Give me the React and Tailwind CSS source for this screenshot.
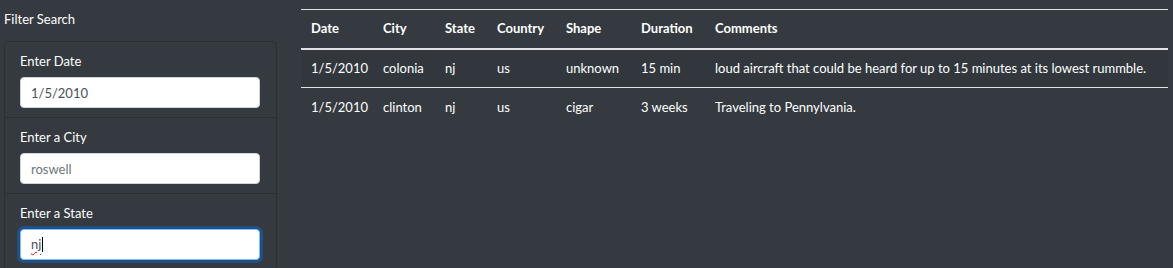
import React from "react";

const rows = [
  {
    date: "1/5/2010",
    city: "colonia",
    state: "nj",
    country: "us",
    shape: "unknown",
    duration: "15 min",
    comments: "loud aircraft that could be heard for up to 15 minutes at its lowest rummble.",
  },
  {
    date: "1/5/2010",
    city: "clinton",
    state: "nj",
    country: "us",
    shape: "cigar",
    duration: "3 weeks",
    comments: "Traveling to Pennylvania.",
  },
];

const headers = [
  { name: "Date", w: "w-[72px]" },
  { name: "City", w: "w-[62px]" },
  { name: "State", w: "w-[52px]" },
  { name: "Country", w: "w-[69px]" },
  { name: "Shape", w: "w-[75px]" },
  { name: "Duration", w: "w-[74px]" },
  { name: "Comments", w: "" },
];

const FilterItem = ({ label, children }) => (
  <li className="px-[15px] pt-[10px] pb-[9px] border-b border-[#2b3035]">
    <label className="block text-[13px] leading-[18px] text-white mb-[7px]">{label}</label>
    {children}
  </li>
);

const App = () => {
  return (
    <div
      className="h-screen overflow-hidden w-full bg-[#343a40] text-white flex"
      style={{ fontFamily: '"Segoe UI", Lato, "Liberation Sans", sans-serif' }}
    >
      {/* sidebar */}
      <div className="w-[277px] shrink-0 pl-[4px]">
        <h5 className="text-[13px] leading-[18px] mt-[10px] mb-[13px]">Filter Search</h5>
        <ul className="border border-[#2b3035] rounded-[4px]">
          <FilterItem label="Enter Date">
            <input
              type="text"
              defaultValue="1/5/2010"
              className="w-[240px] h-[31px] bg-white border border-[#ced4da] rounded-[4px] px-[10px] text-[13px] text-[#495057] outline-none"
            />
          </FilterItem>
          <FilterItem label="Enter a City">
            <input
              type="text"
              placeholder="roswell"
              className="w-[240px] h-[31px] bg-white border border-[#ced4da] rounded-[4px] px-[10px] text-[13px] text-[#495057] placeholder:text-[#6c757d] outline-none"
            />
          </FilterItem>
          <FilterItem label="Enter a State">
            <div className="w-[240px] h-[31px] bg-white border border-[#80bdff] rounded-[4px] px-[10px] text-[13px] text-[#495057] flex items-center shadow-[0_0_0_3px_rgba(0,123,255,0.35)]">
              <span className="underline decoration-wavy decoration-red-600 decoration-1 underline-offset-2">nj</span>
              <span className="w-px h-[15px] bg-black ml-px" />
            </div>
          </FilterItem>
        </ul>
      </div>

      {/* table */}
      <div className="flex-1 pl-[24px] pr-[5px] pt-[9px]">
        <table className="w-full table-fixed text-[13px] text-left border-t border-[#dee2e6]">
          <thead>
            <tr className="border-b-2 border-[#dee2e6]">
              {headers.map((h) => (
                <th key={h.name} className={`font-bold px-[10px] h-[39px] whitespace-nowrap ${h.w}`}>
                  {h.name}
                </th>
              ))}
            </tr>
          </thead>
          <tbody>
            {rows.map((r, i) => (
              <tr
                key={i}
                className={i === 0 ? "bg-[#31373d] border-b border-[#dee2e6]" : ""}
              >
                <td className="px-[10px] h-[39px] whitespace-nowrap">{r.date}</td>
                <td className="px-[10px] whitespace-nowrap">{r.city}</td>
                <td className="px-[10px] whitespace-nowrap">{r.state}</td>
                <td className="px-[10px] whitespace-nowrap">{r.country}</td>
                <td className="px-[10px] whitespace-nowrap">{r.shape}</td>
                <td className="px-[10px] whitespace-nowrap">{r.duration}</td>
                <td className="px-[10px]">{r.comments}</td>
              </tr>
            ))}
          </tbody>
        </table>
      </div>
    </div>
  );
};

export default App;
